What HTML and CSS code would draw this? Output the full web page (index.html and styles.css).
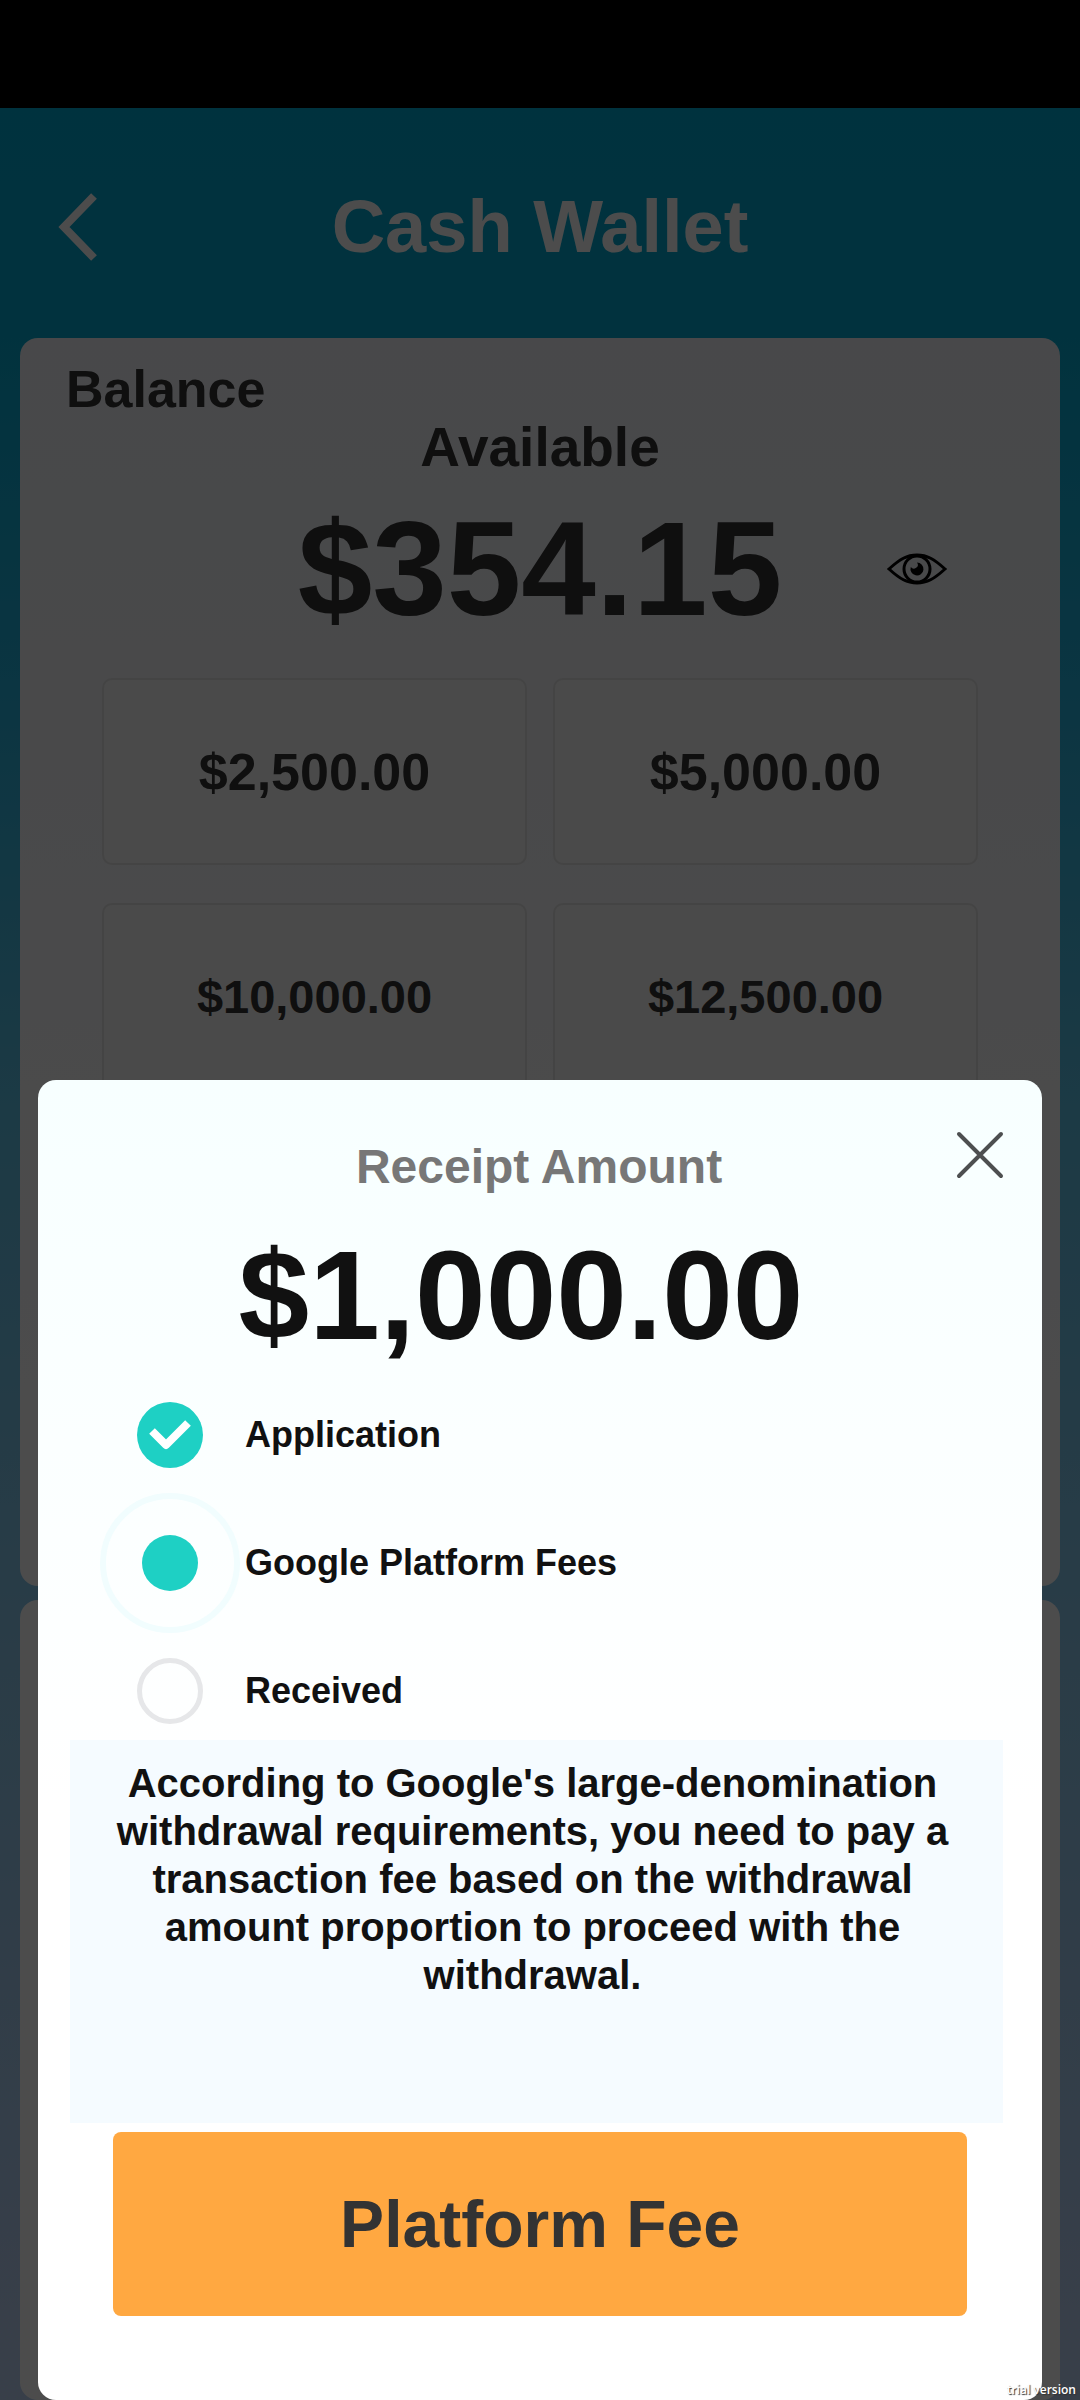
FILE: index.html
```html
<!DOCTYPE html>
<html lang="en">
<head>
<meta charset="utf-8">
<meta name="viewport" content="width=device-width, initial-scale=1">
<title>Cash Wallet</title>
<link rel="stylesheet" href="styles.css">
</head>
<body>
<div class="status-bar"></div>
<div class="screen">
  <header class="header">
    <button class="icon-button back" type="button" aria-label="Back">
      <svg width="40" height="68" viewBox="0 0 40 68" fill="none" stroke="#fff" stroke-width="8"><path d="M36 3 6 34 36 65"/></svg>
    </button>
    <h1 class="title">Cash Wallet</h1>
  </header>
  <main class="content">
    <section class="card wallet">
      <h2 class="wallet-heading">Balance</h2>
      <p class="wallet-label">Available</p>
      <div class="balance-row">
        <p class="balance">$354.15</p>
        <button class="icon-button eye" type="button" aria-label="Show or hide balance">
          <svg width="60" height="34" viewBox="0 0 60 34" fill="none" stroke="#000" stroke-width="3"><path d="M2 17C13 7 20 3 30 3S47 7 58 17C47 27 40 31 30 31S13 27 2 17Z"/><circle cx="30" cy="17" r="13"/><path fill="#000" stroke="none" d="M30 10.500A6.500 6.500 0 1 1 23.800 15 3.500 3.500 0 0 0 30 10.500Z"/></svg>
        </button>
      </div>
      <div class="amounts">
        <button class="amount" type="button">$2,500.00</button>
        <button class="amount" type="button">$5,000.00</button>
        <button class="amount amount-long" type="button">$10,000.00</button>
        <button class="amount amount-long" type="button">$12,500.00</button>
      </div>
    </section>
    <section class="card details"></section>
  </main>
  <div class="overlay">
    <section class="dialog" role="dialog" aria-labelledby="dialog-title">
      <button class="icon-button close" type="button" aria-label="Close">
        <svg width="48" height="48" viewBox="0 0 48 48" fill="none" stroke="#4d4f50" stroke-width="4" stroke-linecap="round"><path d="M3 3 45 45M45 3 3 45"/></svg>
      </button>
      <h2 class="dialog-title" id="dialog-title">Receipt Amount</h2>
      <p class="receipt">$1,000.00</p>
      <ol class="steps">
        <li class="step">
          <span class="marker marker-done"><svg width="42" height="32" viewBox="0 0 42 32" fill="none" stroke="#fff" stroke-width="8" stroke-linejoin="round"><path d="M3 12 17 26 39 4"/></svg></span>
          Application
        </li>
        <li class="step"><span class="marker marker-current"></span>Google Platform Fees</li>
        <li class="step"><span class="marker marker-pending"></span>Received</li>
      </ol>
      <p class="note">According to Google's large-denomination withdrawal requirements, you need to pay a transaction fee based on the withdrawal amount proportion to proceed with the withdrawal.</p>
      <button class="pay" type="button">Platform Fee</button>
    </section>
  </div>
  <span class="watermark">trial version</span>
</div>
</body>
</html>
```
FILE: styles.css
```css
* {
  box-sizing: border-box;
}

body {
  margin: 0;
  min-height: 100vh;
  display: flex;
  flex-direction: column;
  background: #000;
  color: #333;
  font-family: "Liberation Sans", Arial, sans-serif;
  font-weight: 700;
}

h1, h2, p, ol {
  margin: 0;
  padding: 0;
}

button {
  border: 0;
  padding: 0;
  background: none;
  color: inherit;
  font: inherit;
}

svg {
  display: block;
}

.status-bar {
  height: 108px;
}

.screen {
  position: relative;
  flex: 1;
  display: flex;
  flex-direction: column;
  background: linear-gradient(#03a7cf 0%, #06a9d0 10%, #25b1dc 25%, #5dc1e6 43%, #82c8ed 61%, #bbd2f5 96%);
}

.header {
  display: grid;
  grid-template-columns: 1fr auto 1fr;
  align-items: center;
  padding: 77px 58px 69px;
}

.back {
  justify-self: start;
}

.title {
  color: #fff;
  font-size: 74px;
  line-height: 84px;
}

.content {
  flex: 1;
  display: flex;
  flex-direction: column;
  gap: 14px;
  padding: 0 20px;
}

.card {
  border-radius: 18px;
  background: #fff;
}

.wallet {
  min-height: 1248px;
  padding-top: 22px;
  background: linear-gradient(#f0f2f8, #f3f4f8 25%, #fafafc 60%, #fff);
}

.wallet-heading {
  padding-left: 46px;
  font-size: 52px;
  line-height: 58px;
}

.wallet-label {
  font-size: 55px;
  line-height: 58px;
  text-align: center;
}

.balance-row {
  display: grid;
  grid-template-columns: 1fr auto 1fr;
  align-items: center;
  margin-top: 18px;
}

.balance {
  grid-column: 2;
  font-size: 134px;
  line-height: 150px;
}

.eye {
  justify-self: end;
  margin-right: 113px;
}

.amounts {
  display: grid;
  grid-template-columns: 1fr 1fr;
  gap: 38px 26px;
  margin-top: 34px;
  padding: 0 82px;
}

.amount {
  height: 187px;
  border: 2px solid #e4e4e4;
  border-radius: 10px;
  background: #f7f7f7;
  font-size: 52px;
}

.amount-long {
  font-size: 47px;
}

.details {
  flex: 1;
}

.overlay {
  position: absolute;
  inset: 0;
  display: flex;
  flex-direction: column;
  justify-content: flex-end;
  padding: 0 38px;
  background: rgba(0, 0, 0, 0.7);
}

.dialog {
  position: relative;
  display: flex;
  flex-direction: column;
  padding: 59px 0 84px;
  border-radius: 18px;
  background: linear-gradient(#f7ffff, #fff 55%);
  color: #111;
}

.close {
  position: absolute;
  top: 51px;
  right: 38px;
}

.dialog-title {
  padding-right: 2px;
  color: #777;
  font-size: 48px;
  line-height: 56px;
  text-align: center;
}

.receipt {
  margin-top: 28px;
  padding-right: 38px;
  font-size: 127px;
  line-height: 144px;
  text-align: center;
}

.steps {
  display: flex;
  flex-direction: column;
  gap: 62px;
  margin-top: 35px;
  padding-left: 99px;
  font-size: 36px;
  list-style: none;
}

.step {
  display: flex;
  align-items: center;
  gap: 42px;
  isolation: isolate;
}

.marker {
  display: flex;
  align-items: center;
  justify-content: center;
  width: 66px;
  height: 66px;
  border-radius: 50%;
}

.marker-done {
  background: #1ed0c4;
}

.marker-current {
  position: relative;
  z-index: -1;
  border: 5px solid transparent;
  background: #1ed0c4 padding-box;
}

.marker-current::before {
  content: "";
  position: absolute;
  inset: -42px;
  border: 6px solid #f1fdfe;
  border-radius: 50%;
}

.marker-pending {
  border: 5px solid #e6e7e9;
}

.note {
  min-height: 383px;
  margin: 16px 39px 0 32px;
  padding: 19px 50px 0 42px;
  background: #f5fbff;
  font-size: 40px;
  line-height: 48px;
  text-align: center;
}

.pay {
  height: 184px;
  margin: 9px 75px 0;
  border-radius: 8px;
  background: #ffa841;
  color: #333;
  font-size: 66px;
}

.watermark {
  position: absolute;
  right: 4px;
  bottom: 2px;
  color: #fff;
  font: 600 12px/16px "Open Sans", sans-serif;
  text-shadow: 1px 1px 1px #333;
}
```
